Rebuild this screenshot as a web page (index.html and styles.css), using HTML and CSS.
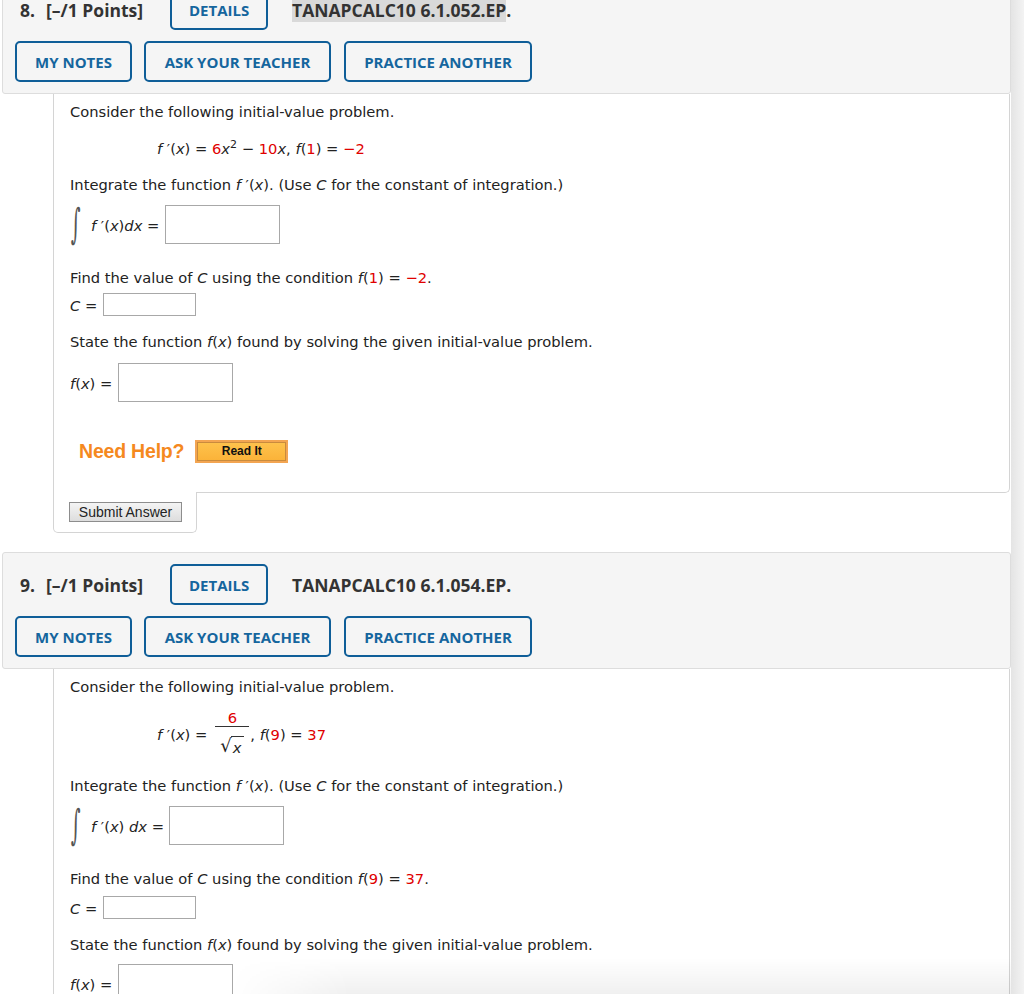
FILE: index.html
```html
<!DOCTYPE html>
<html>
<head>
<meta charset="utf-8">
<title>Questions</title>
<link rel="stylesheet" href="styles.css">
</head>
<body>
<div class="page">

  <section class="question">
    <div class="qhead">
      <div class="hrow">
        <span class="qnum">8.</span>
        <span class="pts">[–/1 Points]</span>
        <span class="btn btn-details">DETAILS</span>
        <span class="code"><span class="hl">TANAPCALC10 6.1.052.EP</span>.</span>
      </div>
      <div class="hrow brow">
        <span class="btn btn-notes">MY NOTES</span>
        <span class="btn btn-ask">ASK YOUR TEACHER</span>
        <span class="btn btn-practice">PRACTICE ANOTHER</span>
      </div>
    </div>
    <div class="qbody">
      <p class="line l-consider">Consider the following initial-value problem.</p>
      <p class="line eq eq1"><i>f</i> ′(<i>x</i>) = <span class="r">6</span><i>x</i><sup>2</sup> − <span class="r">10</span><i>x</i>, <i>f</i>(<span class="r">1</span>) = <span class="r">−2</span></p>
      <p class="line l-integrate">Integrate the function <i>f</i> ′(<i>x</i>). (Use <i>C</i> for the constant of integration.)</p>
      <div class="arow int-row">
        <span class="integral">∫</span>
        <span class="lbl lbl-int"><i>f</i> ′(<i>x</i>)<i>dx</i> =</span>
        <span class="ans ans-big"></span>
      </div>
      <p class="line l-find">Find the value of <i>C</i> using the condition <i>f</i>(<span class="r">1</span>) = <span class="r">−2</span>.</p>
      <div class="arow c-row">
        <span class="lbl"><i>C</i> =</span>
        <span class="ans ans-small"></span>
      </div>
      <p class="line l-state">State the function <i>f</i>(<i>x</i>) found by solving the given initial-value problem.</p>
      <div class="arow f-row">
        <span class="lbl"><i>f</i>(<i>x</i>) =</span>
        <span class="ans ans-big"></span>
      </div>
      <div class="help">
        <span class="need">Need Help?</span>
        <span class="readit">Read It</span>
      </div>
    </div>
    <div class="tab">
      <span class="submit">Submit Answer</span>
    </div>
  </section>

  <section class="question q9">
    <div class="qhead">
      <div class="hrow">
        <span class="qnum">9.</span>
        <span class="pts">[–/1 Points]</span>
        <span class="btn btn-details">DETAILS</span>
        <span class="code">TANAPCALC10 6.1.054.EP.</span>
      </div>
      <div class="hrow brow">
        <span class="btn btn-notes">MY NOTES</span>
        <span class="btn btn-ask">ASK YOUR TEACHER</span>
        <span class="btn btn-practice">PRACTICE ANOTHER</span>
      </div>
    </div>
    <div class="qbody">
      <p class="line l-consider">Consider the following initial-value problem.</p>
      <div class="eq eq2">
        <span class="pre"><i>f</i> ′(<i>x</i>) =</span>
        <span class="frac">
          <span class="num r">6</span>
          <span class="den"><span class="rad">√</span><span class="under"><i>x</i></span></span>
        </span>
        <span class="after">, <i>f</i>(<span class="r">9</span>) = <span class="r">37</span></span>
      </div>
      <p class="line l-integrate">Integrate the function <i>f</i> ′(<i>x</i>). (Use <i>C</i> for the constant of integration.)</p>
      <div class="arow int-row">
        <span class="integral">∫</span>
        <span class="lbl lbl-int"><i>f</i> ′(<i>x</i>) <i>dx</i> =</span>
        <span class="ans ans-big"></span>
      </div>
      <p class="line l-find">Find the value of <i>C</i> using the condition <i>f</i>(<span class="r">9</span>) = <span class="r">37</span>.</p>
      <div class="arow c-row">
        <span class="lbl"><i>C</i> =</span>
        <span class="ans ans-small"></span>
      </div>
      <p class="line l-state">State the function <i>f</i>(<i>x</i>) found by solving the given initial-value problem.</p>
      <div class="arow f-row">
        <span class="lbl"><i>f</i>(<i>x</i>) =</span>
        <span class="ans ans-big"></span>
      </div>
    </div>
  </section>

</div>
<div class="edge"></div>
<div class="shade"></div>
</body>
</html>
```

FILE: styles.css
```css
* { box-sizing: border-box; }

html, body { height: 100%; }

body {
  margin: 0;
  background: #fff;
  color: #222;
  font-family: "DejaVu Sans", Verdana, sans-serif;
  overflow: hidden;
}

.page {
  margin-top: -23px;
  margin-left: 2px;
  width: 1009px;
}

.question { margin-bottom: 19px; }

/* ---------- header ---------- */
.qhead {
  background: #f5f5f5;
  border: 1px solid #dddddd;
  border-radius: 3px;
  padding: 11px 12px;
  display: flex;
  flex-direction: column;
  gap: 11px;
  font-family: "Open Sans", "Noto Sans", sans-serif;
}

.hrow {
  display: flex;
  align-items: center;
}

.brow { gap: 12px; }

.qnum {
  margin-left: 5px;
  font-weight: 700;
  font-size: 17.5px;
  color: #333;
}

.pts {
  margin-left: 11px;
  font-weight: 700;
  font-size: 17.5px;
  color: #333;
}

.code {
  margin-left: 24px;
  font-weight: 700;
  font-size: 17.5px;
  color: #333;
}

.hl { background: #d9d9d9; }

.btn {
  display: inline-flex;
  align-items: center;
  justify-content: center;
  height: 41px;
  border: 2px solid #0f5e98;
  border-radius: 5px;
  color: #15669e;
  font-weight: 700;
  font-size: 15px;
}

.btn-details { margin-left: 27px; width: 98px; }
.btn-notes { width: 117px; }
.btn-ask { width: 187px; }
.btn-practice { width: 188px; margin-left: 1px; }

/* ---------- body ---------- */
.qbody {
  margin-left: 51px;
  margin-right: 1px;
  border: 1px solid #d4d4d4;
  border-top: none;
  border-radius: 0 0 5px 0;
  padding: 9px 16px 29px 16px;
  font-size: 14.7px;
  line-height: 17px;
}

.q9 .qbody { border-bottom: none; border-radius: 0; padding-bottom: 0; }

.line { margin: 0; }

.r { color: #e00000; }

i { font-style: italic; }

sup {
  font-size: 11px;
  line-height: 0;
  vertical-align: 6px;
}

.eq1 { margin-top: 20px; padding-left: 87px; }
.l-integrate { margin-top: 19px; }

.arow {
  display: flex;
  align-items: center;
}

.int-row { margin-top: 12px; height: 38px; }

.integral {
  width: 21px;
  padding-left: 1px;
  font-family: "DejaVu Serif", serif;
  font-size: 26px;
  line-height: 38px;
  display: inline-block;
  transform: scaleY(1.6) scaleX(0.72);
  transform-origin: 0 50%;
  color: #555;
}

.lbl { white-space: pre; margin-top: 2px; }
.lbl-int { margin-right: 6px; }

.ans {
  display: inline-block;
  background: #fff;
  border: 1px solid #a8a8a8;
}

.ans-big { width: 115px; height: 39px; }
.ans-small { width: 93px; height: 23px; margin-left: 6px; }

.l-find { margin-top: 26px; }
.c-row { margin-top: 7px; }
.l-state { margin-top: 17px; }
.f-row { margin-top: 13px; }
.f-row .ans { margin-left: 6px; }

.help {
  margin-top: 38px;
  display: flex;
  align-items: center;
  padding-left: 9px;
}

.need {
  font-family: "Liberation Sans", Arial, sans-serif;
  font-weight: 700;
  font-size: 19.5px;
  color: #f5891e;
  letter-spacing: -0.2px;
}

.readit {
  margin-left: 11px;
  width: 93px;
  height: 23px;
  display: inline-flex;
  align-items: center;
  justify-content: center;
  border: 2px solid #f3a552;
  box-shadow: inset 0 0 0 1px #c98b3e;
  background: linear-gradient(#fec34d, #fbb238);
  font-family: "Liberation Sans", Arial, sans-serif;
  font-weight: 700;
  font-size: 12px;
  color: #111;
}

.tab {
  margin-left: 51px;
  margin-top: -1px;
  width: 144px;
  height: 41px;
  background: #fff;
  border: 1px solid #d4d4d4;
  border-top: none;
  border-radius: 0 0 5px 5px;
  padding: 10px 0 0 15px;
}

.submit {
  display: inline-flex;
  align-items: center;
  justify-content: center;
  width: 113px;
  height: 20px;
  border: 1px solid #8d8d8d;
  background: linear-gradient(#f4f4f4, #dddddd);
  font-family: "Liberation Sans", Arial, sans-serif;
  font-size: 14px;
  color: #222;
}

/* ---------- question 9 ---------- */
.eq2 {
  margin-top: 16px;
  padding-left: 87px;
  display: flex;
  align-items: center;
  height: 46px;
}

.frac {
  display: inline-flex;
  flex-direction: column;
  align-items: center;
  margin-left: 8px;
  margin-bottom: 2px;
  width: 34px;
}

.num {
  width: 100%;
  text-align: center;
  line-height: 14px;
  padding-bottom: 1px;
  border-bottom: 1px solid #333;
}

.den {
  display: flex;
  align-items: flex-end;
  padding-top: 8px;
}

.rad {
  font-size: 18px;
  line-height: 21px;
  margin-right: -1px;
}

.under {
  border-top: 1px solid #333;
  padding: 2px 3px 0 2px;
  line-height: 17px;
}

.after { margin-left: 1px; }

.q9 .l-integrate { margin-top: 20px; }
.q9 .int-row { margin-top: 12px; }
.q9 .lbl-int { margin-right: 5px; }
.q9 .l-find { margin-top: 26px; }
.q9 .c-row { margin-top: 9px; }
.q9 .l-state { margin-top: 17px; }
.q9 .f-row { margin-top: 11px; }

/* decorative edges */
.edge {
  position: fixed;
  top: 0;
  right: 0;
  width: 13px;
  height: 100%;
  background: linear-gradient(to right, #e4e4e4, #f3f3f3);
}

.shade {
  position: fixed;
  left: 230px;
  right: 13px;
  bottom: 0;
  height: 36px;
  background: linear-gradient(to bottom, rgba(0,0,0,0), rgba(0,0,0,0.06));
  -webkit-mask-image: linear-gradient(to right, transparent, #000 120px);
  mask-image: linear-gradient(to right, transparent, #000 120px);
  pointer-events: none;
}
```
